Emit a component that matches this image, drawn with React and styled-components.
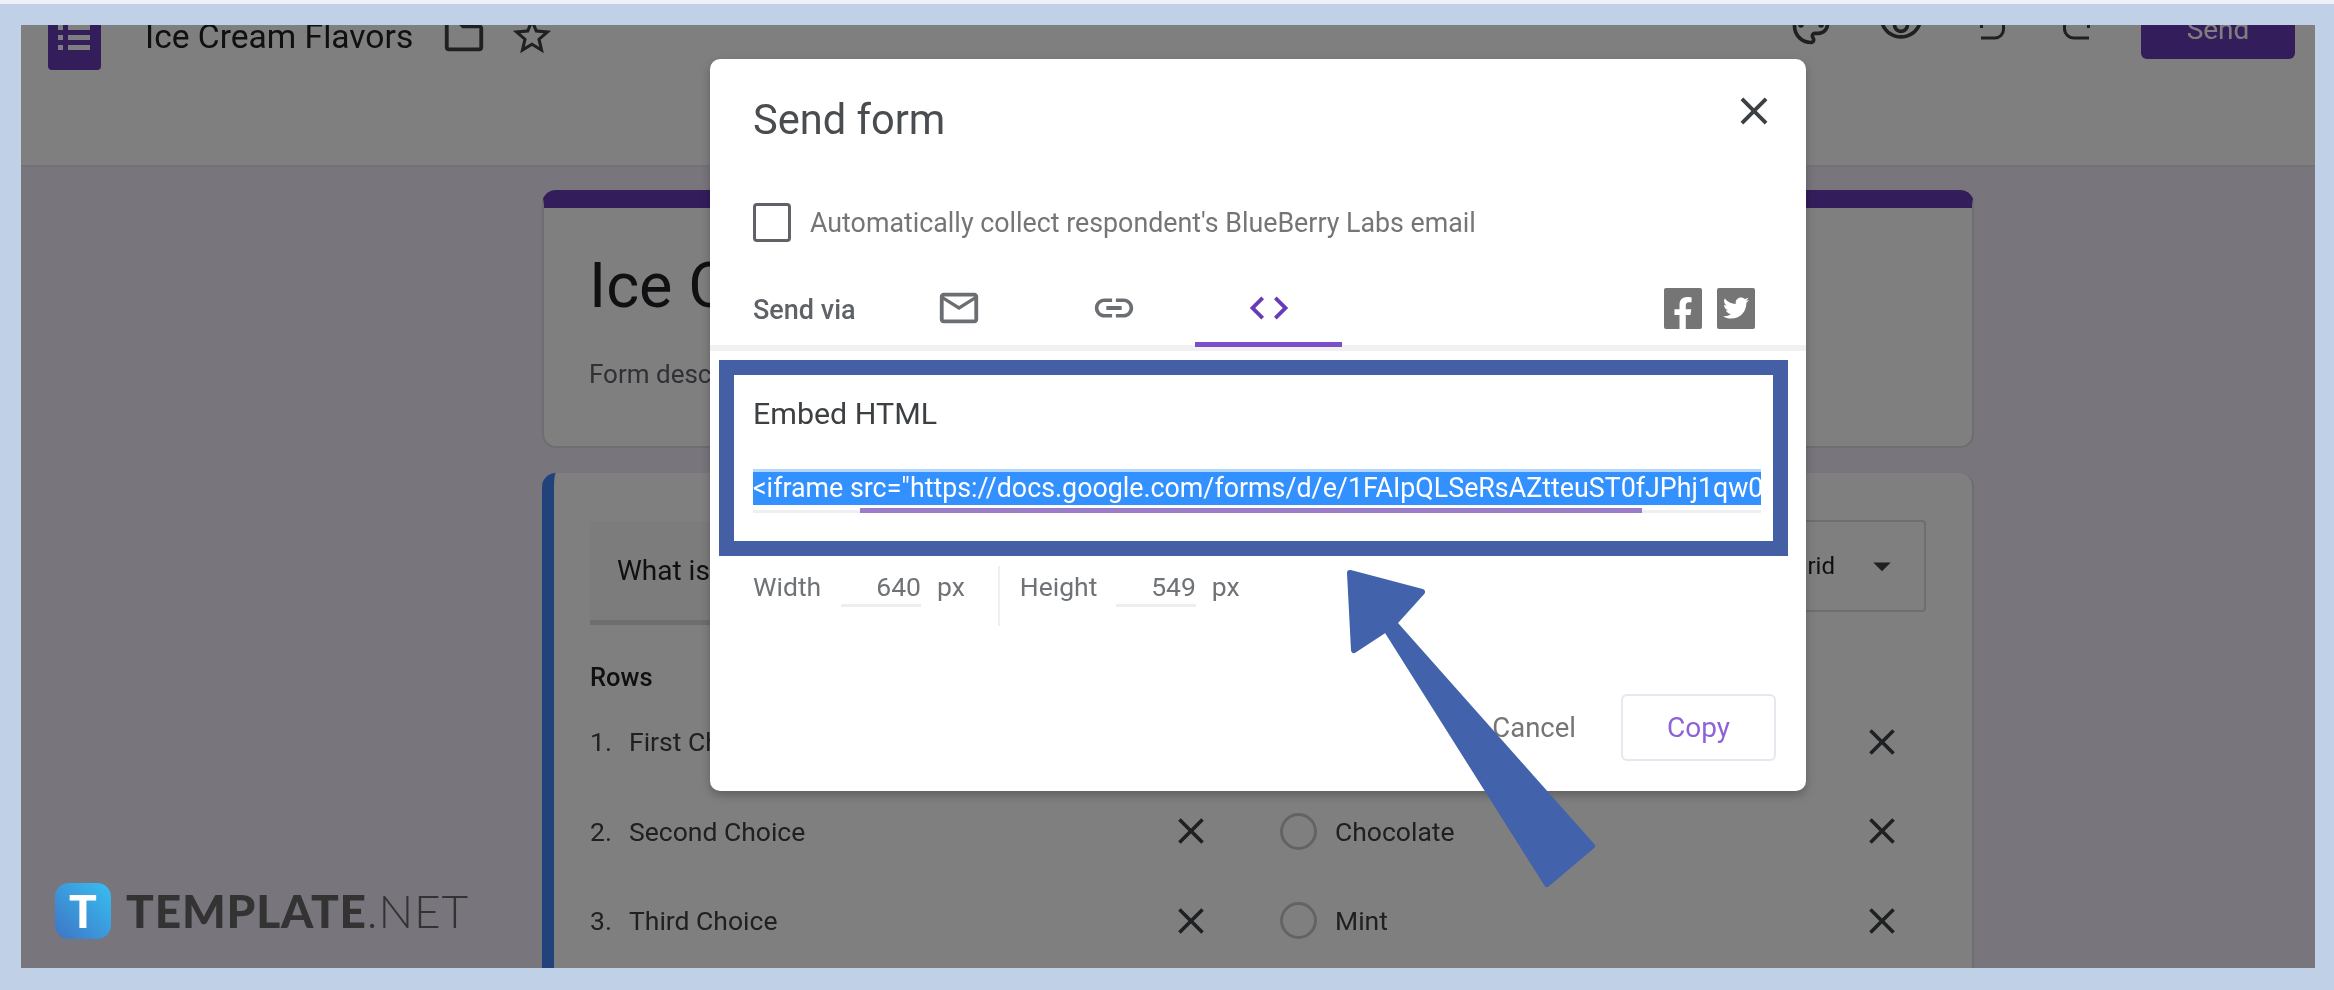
import React from "react";
import styled, { createGlobalStyle } from "styled-components";
import {
	MdOutlineFolder,
	MdStarBorder,
	MdOutlinePalette,
	MdOutlineRemoveRedEye,
	MdClose,
	MdMailOutline,
	MdLink,
	MdCode,
	MdArrowDropDown
} from "react-icons/md";
import { FaFacebookF, FaTwitter } from "react-icons/fa";

const GlobalStyle = createGlobalStyle`
	html, body {
		margin: 0;
		padding: 0;
		background: #c0d0e6;
	}
	* {
		box-sizing: border-box;
	}
`;

const Frame = styled.div`
	width: 2334px;
	height: 990px;
	padding: 25px 19px 22px 21px;
	background: #c0d0e6;
	border-top: 4px solid #eef2f8;
	overflow: hidden;
	font-family: Roboto, "Liberation Sans", sans-serif;
`;

const Stage = styled.div`
	position: relative;
	width: 2294px;
	height: 943px;
	margin-top: -4px;
	overflow: hidden;
	filter: blur(0.7px);
`;

const FormsPage = styled.div`
	height: 100%;
	background: #f0ebf8;
`;

const Header = styled.header`
	display: flex;
	align-items: flex-start;
	height: 142px;
	background: #fff;
	border-bottom: 2px solid #e8e4ee;
	padding-left: 27px;
	padding-right: 20px;
	overflow: hidden;
`;

const FormsLogo = styled.svg`
	display: block;
	flex: none;
	width: 53px;
	height: 45px;
`;

const DocTitle = styled.div`
	margin: -1px 0 0 44px;
	font-size: 33.6px;
	line-height: 26px;
	color: #202124;
`;

const TitleIcons = styled.div`
	display: flex;
	align-items: flex-start;
	gap: 22px;
	margin: -12px 0 0 28px;
	font-size: 46px;
	color: #3c4043;
	line-height: 0;
`;

const HeaderActions = styled.div`
	display: flex;
	align-items: flex-start;
	margin-left: auto;
	color: #3c4043;
`;

const ActionIcon = styled.span`
	display: block;
	margin-top: ${(p) => p.$top}px;
	margin-right: ${(p) => p.$gap}px;
	font-size: 44px;
	line-height: 0;
`;

const HistoryIcon = styled.svg`
	display: block;
	margin-right: ${(p) => p.$gap}px;
	fill: none;
	stroke: #3c4043;
	stroke-width: 3;
`;

const SendButton = styled.button`
	display: flex;
	justify-content: center;
	align-items: flex-end;
	width: 154px;
	height: 34px;
	padding: 0 0 14px;
	border: 0;
	border-radius: 0 0 6px 6px;
	background: #673ab7;
	color: #fff;
	font-family: inherit;
	font-size: 28px;
	line-height: 30px;
	overflow: hidden;
`;

const Main = styled.main`
	display: flex;
	flex-direction: column;
	gap: 25px;
	width: 1432px;
	margin: 23px 0 0 521px;
`;

const TitleCard = styled.section`
	height: 258px;
	padding: 0 45px;
	background: #fff;
	border: 2px solid #dadce0;
	border-top: 18px solid #673ab7;
	border-radius: 14px;
`;

const FormTitle = styled.h1`
	margin: 43px 0 0;
	font-size: 63px;
	font-weight: 400;
	line-height: 70px;
	color: #202124;
	white-space: nowrap;
`;

const FormDescription = styled.div`
	margin-top: 38px;
	font-size: 26px;
	line-height: 30px;
	color: #5f6368;
`;

const QuestionCard = styled.section`
	height: 500px;
	padding: 48px 50px 0 36px;
	background: #fff;
	border-left: 12px solid #4285f4;
	border-right: 2px solid #dadce0;
	border-radius: 14px 14px 0 0;
`;

const QuestionRow = styled.div`
	display: flex;
	justify-content: space-between;
	align-items: flex-start;
`;

const QuestionInput = styled.div`
	width: 800px;
	height: 104px;
	padding: 30px 27px 0;
	background: #f8f9fa;
	border-bottom: 5px solid #dadce0;
	font-size: 28px;
	line-height: 40px;
	color: #202124;
`;

const TypeSelect = styled.div`
	display: flex;
	align-items: center;
	justify-content: flex-end;
	gap: 26px;
	width: 404px;
	height: 92px;
	margin-top: -1px;
	margin-right: -4px;
	padding-right: 21px;
	border: 2px solid #dadce0;
	border-radius: 4px;
	font-size: 24px;
	color: #202124;
`;

const DropIcon = styled.span`
	display: block;
	font-size: 42px;
	line-height: 0;
	color: #3c4043;
`;

const SectionLabel = styled.div`
	margin-top: 37px;
	font-size: 25.5px;
	font-weight: 500;
	line-height: 30px;
	color: #202124;
`;

const OptionGrid = styled.div`
	display: flex;
	flex-direction: column;
	margin-top: 5px;
`;

const OptionRow = styled.div`
	display: flex;
	align-items: center;
	height: 89.5px;
	font-size: 26.5px;
	color: #3c4043;
`;

const OptionNumber = styled.span`
	width: 39px;
`;

const OptionName = styled.span`
	width: 540px;
`;

const RemoveIcon = styled.span`
	display: block;
	width: 44px;
	font-size: 44px;
	line-height: 0;
	color: #3c4043;
`;

const RadioDot = styled.span`
	display: block;
	width: 37px;
	height: 37px;
	margin-left: 67px;
	border: 3px solid #c4c7c5;
	border-radius: 50%;
`;

const FlavorName = styled.span`
	width: 525px;
	margin-left: 18px;
`;

const Brand = styled.div`
	position: absolute;
	left: 34px;
	bottom: 29px;
	display: flex;
	align-items: center;
	gap: 15px;
	font-family: Lato, "Open Sans", sans-serif;
	color: #333;
`;

const BrandMark = styled.div`
	display: flex;
	align-items: center;
	justify-content: center;
	width: 56px;
	height: 56px;
	border-radius: 14px;
	background: linear-gradient(45deg, #3f74c4, #38bff2);
	color: #fff;
	font-size: 46px;
	font-weight: 900;
	line-height: 1;
`;

const BrandName = styled.div`
	font-size: 46px;
	font-weight: 900;
	line-height: 1;
	letter-spacing: 0.85px;
	span {
		font-weight: 300;
	}
`;

const Scrim = styled.div`
	position: absolute;
	inset: 0;
	background: rgba(0, 0, 0, 0.5);
`;

const Modal = styled.div`
	position: absolute;
	left: 689px;
	top: 34px;
	width: 1096px;
	height: 732px;
	padding: 0 43px;
	background: #fff;
	border-radius: 10px;
	box-shadow: 0 4px 10px rgba(0, 0, 0, 0.25);
	color: #5f6368;
`;

const ModalHead = styled.div`
	display: flex;
	justify-content: space-between;
	align-items: center;
	height: 116px;
`;

const ModalTitle = styled.h2`
	margin: 4px 0 0;
	font-size: 41.6px;
	font-weight: 400;
	color: #4a4d50;
`;

const CloseIcon = styled.span`
	display: block;
	margin: -12px -14px 0 0;
	font-size: 46px;
	line-height: 0;
	color: #3c4043;
`;

const CollectRow = styled.label`
	display: flex;
	align-items: center;
	gap: 19px;
	margin-top: 28px;
	font-size: 26.8px;
	color: #757575;
`;

const CheckBox = styled.span`
	display: block;
	width: 38px;
	height: 39px;
	border: 3px solid #5f6368;
	border-radius: 4px;
`;

const TabsRow = styled.div`
	display: flex;
	align-items: flex-end;
	height: 109px;
	margin: 0 -43px;
	padding: 0 43px;
	border-bottom: 6px solid #f1f1f1;
`;

const SendVia = styled.div`
	width: 132px;
	margin-bottom: 19px;
	font-size: 27px;
	font-weight: 500;
	line-height: 32px;
	color: #5f6368;
`;

const Tab = styled.div`
	display: flex;
	justify-content: center;
	width: 147px;
	height: 62px;
	margin-right: 8px;
	margin-bottom: -2px;
	font-size: 46px;
	line-height: 0;
	color: ${(p) => (p.$active ? "#673ab7" : "#6b6f73")};
	border-bottom: 5px solid ${(p) => (p.$active ? "#7b4fc9" : "transparent")};
`;

const ShareIcons = styled.div`
	display: flex;
	gap: 15px;
	margin: 0 8px 16px auto;
`;

const ShareTile = styled.span`
	display: flex;
	align-items: flex-end;
	justify-content: center;
	width: 38px;
	height: 41px;
	padding-bottom: ${(p) => p.$pad}px;
	border-radius: 2px;
	background: #757575;
	color: #fff;
	font-size: ${(p) => p.$size}px;
	line-height: 0;
`;

const EmbedBlock = styled.div`
	padding-top: 45px;
`;

const EmbedLabel = styled.div`
	font-size: 30.4px;
	line-height: 36px;
	color: #3c4043;
`;

const EmbedField = styled.div`
	position: relative;
	width: 1008px;
	height: 44px;
	margin-top: 37px;
	overflow: hidden;
	&::after {
		content: "";
		position: absolute;
		left: 0;
		right: 0;
		bottom: 0;
		height: 3px;
		background: #efefef;
	}
`;

const EmbedCode = styled.div`
	height: 36px;
	background: #3390ff;
	border-top: 3px solid #b3d7ff;
	color: #fff;
	font-size: 26.8px;
	line-height: 32px;
	white-space: nowrap;
	overflow: hidden;
`;

const FieldFocus = styled.div`
	position: absolute;
	z-index: 1;
	left: 107px;
	bottom: 0;
	width: 782px;
	height: 5px;
	background: #9a7cc8;
`;

const SizeRow = styled.div`
	display: flex;
	height: 60px;
	margin-top: 53px;
	font-size: 26.5px;
	color: #6f7276;
`;

const SizeGroup = styled.div`
	display: flex;
	align-items: flex-start;
	padding-right: 33px;
	margin-right: 20px;
	border-right: ${(p) => (p.$divided ? "2px solid #efefef" : "0")};
`;

const SizeLabel = styled.span`
	width: ${(p) => p.$w}px;
	line-height: 42px;
`;

const SizeValue = styled.span`
	width: 80px;
	height: 41px;
	margin-right: 16px;
	text-align: right;
	line-height: 42px;
	border-bottom: 3px solid #eeeeee;
`;

const SizeUnit = styled.span`
	line-height: 42px;
`;

const ModalActions = styled.div`
	display: flex;
	justify-content: flex-end;
	align-items: center;
	gap: 45px;
	margin: 68px -13px 0 0;
`;

const CancelLabel = styled.span`
	font-size: 27.5px;
	color: #757575;
`;

const CopyButton = styled.button`
	width: 155px;
	height: 67px;
	background: #fff;
	border: 2px solid #e8e6ee;
	border-radius: 6px;
	color: #8e63d8;
	font-family: inherit;
	font-size: 28px;
`;

const Callout = styled.div`
	position: absolute;
	left: 698px;
	top: 335px;
	width: 1069px;
	height: 196px;
	border: 15px solid #455fa4;
	pointer-events: none;
`;

const ArrowDrawing = styled.svg`
	position: absolute;
	left: 0;
	top: 0;
	pointer-events: none;
`;

const rowsData = [
	{ n: "1.", name: "First Choice", flavor: "" },
	{ n: "2.", name: "Second Choice", flavor: "Chocolate" },
	{ n: "3.", name: "Third Choice", flavor: "Mint" }
];

const App = () => {
	return (
		<>
			<GlobalStyle />
			<Frame>
				<Stage>
					<FormsPage>
						<Header>
							<FormsLogo viewBox="0 0 53 45">
								<path d="M0 0H53V41a4 4 0 0 1-4 4H4a4 4 0 0 1-4-4Z" fill="#673ab7" />
								<g fill="#fff">
									<rect x="10" y="0" width="5" height="5" />
									<rect x="20" y="0" width="22" height="5" />
									<rect x="10" y="10" width="5" height="5" />
									<rect x="20" y="10" width="22" height="5" />
									<rect x="10" y="20" width="5" height="5" />
									<rect x="20" y="20" width="22" height="5" />
								</g>
							</FormsLogo>
							<DocTitle>Ice Cream Flavors</DocTitle>
							<TitleIcons>
								<MdOutlineFolder />
								<MdStarBorder />
							</TitleIcons>
							<HeaderActions>
								<ActionIcon $top={-21} $gap={46}>
									<MdOutlinePalette />
								</ActionIcon>
								<ActionIcon $top={-22} $gap={57}>
									<MdOutlineRemoveRedEye />
								</ActionIcon>
								<HistoryIcon width="25" height="15" viewBox="0 0 25 15" $gap={58}>
									<path d="M1 13H15A8.5 8.5 0 0 0 23.5 4.5V0M1.5 0V3" />
								</HistoryIcon>
								<HistoryIcon width="27" height="15" viewBox="0 0 27 15" $gap={51}>
									<path d="M26 13H11A9.5 9.5 0 0 1 1.5 3.5V0M25.5 0V3" />
								</HistoryIcon>
								<SendButton>Send</SendButton>
							</HeaderActions>
						</Header>
						<Main>
							<TitleCard>
								<FormTitle>Ice Cream Flavors</FormTitle>
								<FormDescription>Form description</FormDescription>
							</TitleCard>
							<QuestionCard>
								<QuestionRow>
									<QuestionInput>What is</QuestionInput>
									<TypeSelect>
										Multiple choice grid
										<DropIcon>
											<MdArrowDropDown />
										</DropIcon>
									</TypeSelect>
								</QuestionRow>
								<SectionLabel>Rows</SectionLabel>
								<OptionGrid>
									{rowsData.map((row) => (
										<OptionRow key={row.n}>
											<OptionNumber>{row.n}</OptionNumber>
											<OptionName>{row.name}</OptionName>
											<RemoveIcon>
												<MdClose />
											</RemoveIcon>
											<RadioDot />
											<FlavorName>{row.flavor}</FlavorName>
											<RemoveIcon>
												<MdClose />
											</RemoveIcon>
										</OptionRow>
									))}
								</OptionGrid>
							</QuestionCard>
						</Main>
					</FormsPage>
					<Scrim />
					<Brand>
						<BrandMark>T</BrandMark>
						<BrandName>
							TEMPLATE<span>.NET</span>
						</BrandName>
					</Brand>
					<Modal>
						<ModalHead>
							<ModalTitle>Send form</ModalTitle>
							<CloseIcon>
								<MdClose />
							</CloseIcon>
						</ModalHead>
						<CollectRow>
							<CheckBox />
							Automatically collect respondent's BlueBerry Labs email
						</CollectRow>
						<TabsRow>
							<SendVia>Send via</SendVia>
							<Tab>
								<MdMailOutline />
							</Tab>
							<Tab>
								<MdLink />
							</Tab>
							<Tab $active>
								<MdCode />
							</Tab>
							<ShareIcons>
								<ShareTile $size={32} $pad={0}>
									<FaFacebookF />
								</ShareTile>
								<ShareTile $size={26} $pad={8}>
									<FaTwitter />
								</ShareTile>
							</ShareIcons>
						</TabsRow>
						<EmbedBlock>
							<EmbedLabel>Embed HTML</EmbedLabel>
							<EmbedField>
								<EmbedCode>
									{'<iframe src="https://docs.google.com/forms/d/e/1FAIpQLSeRsAZtteuST0fJPhj1qw0'}
								</EmbedCode>
								<FieldFocus />
							</EmbedField>
						</EmbedBlock>
						<SizeRow>
							<SizeGroup $divided>
								<SizeLabel $w={88}>Width</SizeLabel>
								<SizeValue>640</SizeValue>
								<SizeUnit>px</SizeUnit>
							</SizeGroup>
							<SizeGroup>
								<SizeLabel $w={96}>Height</SizeLabel>
								<SizeValue>549</SizeValue>
								<SizeUnit>px</SizeUnit>
							</SizeGroup>
						</SizeRow>
						<ModalActions>
							<CancelLabel>Cancel</CancelLabel>
							<CopyButton>Copy</CopyButton>
						</ModalActions>
					</Modal>
					<Callout />
					<ArrowDrawing width="2294" height="943" viewBox="0 0 2294 943">
						<path
							d="M1329 548 L1401 567 L1373 598 L1571 821 L1526 859 L1365 604 L1333 625 Z"
							fill="#4263ab"
							stroke="#4263ab"
							strokeWidth="6"
							strokeLinejoin="round"
						/>
					</ArrowDrawing>
				</Stage>
			</Frame>
		</>
	);
};

export default App;
